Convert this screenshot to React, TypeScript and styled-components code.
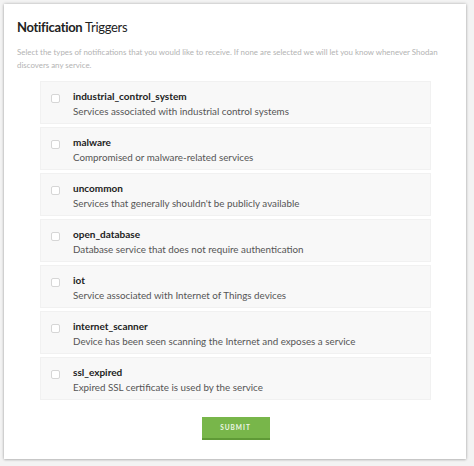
import React from "react";
import styled, { createGlobalStyle } from "styled-components";

const Global = createGlobalStyle`
  html, body { margin: 0; padding: 0; }
  body {
    background: #f3f3f3;
    font-family: "Lato", "Open Sans", sans-serif;
    width: 474px;
    height: 466px;
    overflow: hidden;
  }
`;

const Page = styled.div`
  padding: 4px 8px 7px 4px;
`;

const Card = styled.section`
  background: #ffffff;
  height: 455px;
  box-sizing: border-box;
  box-shadow: 0 0 3px rgba(0, 0, 0, 0.28), 0 1px 2px rgba(0, 0, 0, 0.12);
  padding: 14px 35px 0 13px;
  display: flex;
  flex-direction: column;
`;

const Title = styled.h2`
  margin: 0;
  font-size: 13px;
  font-weight: 400;
  color: #222;
  line-height: 18px;
  letter-spacing: -0.3px;
  strong { font-weight: 700; }
`;

const Lead = styled.p`
  margin: 10px 0 0 0;
  font-size: 7.9px;
  line-height: 12.5px;
  color: #b3b3b3;
  width: 430px;
`;

const List = styled.div`
  margin: 10px 0 0 23px;
  display: flex;
  flex-direction: column;
  gap: 3px;
`;

const Row = styled.label`
  display: flex;
  align-items: flex-start;
  background: #f8f8f8;
  border: 1px solid #f1f1f1;
  height: 43px;
  box-sizing: border-box;
  padding: 8px 10px 0 10px;
`;

const Box = styled.span`
  width: 7px;
  height: 7px;
  margin-top: 4px;
  border: 1px solid #d6d6d6;
  border-radius: 2px;
  background: #fff;
  flex: none;
`;

const Text = styled.div`
  margin-left: 13px;
  display: flex;
  flex-direction: column;
`;

const Name = styled.span`
  font-size: 10px;
  font-weight: 700;
  color: #222;
  line-height: 13px;
`;

const Desc = styled.span`
  font-size: 9.8px;
  color: #555;
  line-height: 14px;
  margin-top: 1px;
`;

const Footer = styled.div`
  display: flex;
  justify-content: center;
  margin-top: 17px;
  padding-left: 23px;
`;

const Submit = styled.button`
  width: 68px;
  height: 23px;
  border: none;
  border-bottom: 2px solid #5f9a36;
  background: #78b64a;
  color: #eef7e6;
  font-family: "Lato", sans-serif;
  font-size: 6.5px;
  font-weight: 700;
  letter-spacing: 1px;
  padding: 0;
`;

const items = [
  ["industrial_control_system", "Services associated with industrial control systems"],
  ["malware", "Compromised or malware-related services"],
  ["uncommon", "Services that generally shouldn't be publicly available"],
  ["open_database", "Database service that does not require authentication"],
  ["iot", "Service associated with Internet of Things devices"],
  ["internet_scanner", "Device has been seen scanning the Internet and exposes a service"],
  ["ssl_expired", "Expired SSL certificate is used by the service"],
];

export default function App() {
  return (
    <>
      <Global />
      <Page>
        <Card>
          <Title>
            <strong>Notification</strong> Triggers
          </Title>
          <Lead>
            Select the types of notifications that you would like to receive. If none are selected we will let you know whenever Shodan discovers any service.
          </Lead>
          <List>
            {items.map(([n, d]) => (
              <Row key={n}>
                <Box />
                <Text>
                  <Name>{n}</Name>
                  <Desc>{d}</Desc>
                </Text>
              </Row>
            ))}
          </List>
          <Footer>
            <Submit>SUBMIT</Submit>
          </Footer>
        </Card>
      </Page>
    </>
  );
}
